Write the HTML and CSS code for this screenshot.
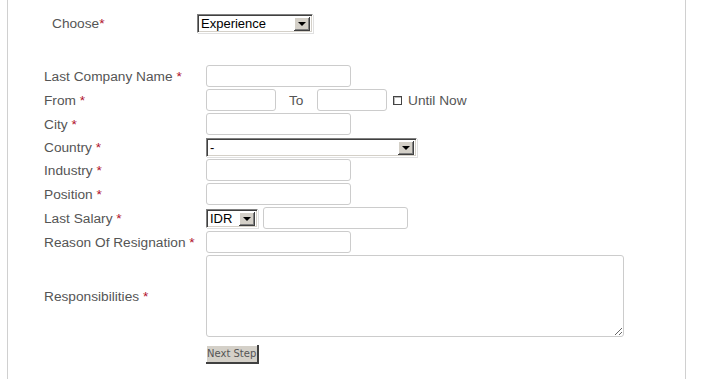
FILE: index.html
```html
<!DOCTYPE html>
<html lang="en">
<head>
    <meta charset="UTF-8">
    <title>Experience</title>
    <link rel="stylesheet" href="styles.css">
</head>
<body>
    <div class="page">
        <div class="choose-row">
            <label class="choose-label">Choose<span class="req">*</span></label>
            <span class="select-box choose-select">
                <select>
                    <option>Experience</option>
                </select>
            </span>
        </div>

        <!-- Form pengalaman kerja -->
        <form class="form-grid">
            <label>Last Company Name <span class="req">*</span></label>
            <div class="field"><input type="text" class="txt"></div>

            <label>From <span class="req">*</span></label>
            <div class="field">
                <input type="text" class="txt short">
                <span class="to">To</span>
                <input type="text" class="txt short">
                <input type="checkbox" class="check">
                <span class="until">Until Now</span>
            </div>

            <label>City <span class="req">*</span></label>
            <div class="field"><input type="text" class="txt"></div>

            <label>Country <span class="req">*</span></label>
            <div class="field compact">
                <span class="select-box country-select">
                    <select><option>-</option></select>
                </span>
            </div>

            <label>Industry <span class="req">*</span></label>
            <div class="field"><input type="text" class="txt"></div>

            <label>Position <span class="req">*</span></label>
            <div class="field"><input type="text" class="txt"></div>

            <label>Last Salary <span class="req">*</span></label>
            <div class="field">
                <span class="select-box currency-select">
                    <select><option>IDR</option></select>
                </span>
                <input type="text" class="txt salary">
            </div>

            <label>Reason Of Resignation <span class="req">*</span></label>
            <div class="field"><input type="text" class="txt"></div>

            <label>Responsibilities <span class="req">*</span></label>
            <div class="field"><textarea class="area"></textarea></div>

            <span></span>
            <div class="field submit-row"><button type="button" class="btn">Next Step</button></div>
        </form>
    </div>
</body>
</html>
```

FILE: styles.css
```css
* {
    box-sizing: border-box;
}
body {
    margin: 0;
    font-family: "Liberation Sans", Arial, sans-serif;
    font-size: 13.7px;
    color: #555;
    background: #fff;
}
.page {
    margin-left: 7px;
    width: 679px;
    height: 379px;
    border-left: 1px solid #d0d0d0;
    border-right: 1px solid #d0d0d0;
}
.req {
    color: #b0102a;
}
.choose-row {
    display: flex;
    align-items: center;
    padding-top: 14px;
    padding-left: 44px;
}
.choose-label {
    width: 145px;
}
.select-box {
    position: relative;
    display: inline-block;
    height: 19px;
    border-top: 1px solid #808080;
    border-left: 1px solid #808080;
    border-right: 1px solid #fff;
    border-bottom: 1px solid #fff;
    box-shadow: inset 1px 1px 0 #404040, inset -1px -1px 0 #d4d0c8, 1px 1px 0 #e0e0e0;
    background: #fff;
}
.select-box select {
    appearance: none;
    -webkit-appearance: none;
    border: none;
    background: transparent;
    width: 100%;
    height: 100%;
    padding: 0 0 0 3px;
    font-family: "Liberation Sans", Arial, sans-serif;
    font-size: 13px;
    color: #000;
    outline: none;
}
.select-box::after {
    content: "";
    position: absolute;
    top: 2px;
    right: 2px;
    width: 15px;
    height: 13px;
    background: #d4d0c8;
    border-right: 1px solid #404040;
    border-bottom: 1px solid #404040;
    box-shadow: inset 1px 1px 0 #fff, inset -1px -1px 0 #808080;
}
.select-box::before {
    content: "";
    position: absolute;
    z-index: 1;
    top: 7px;
    right: 6px;
    border-left: 4px solid transparent;
    border-right: 4px solid transparent;
    border-top: 4px solid #000;
}
.choose-select {
    width: 116px;
}
.country-select {
    width: 211px;
}
.currency-select {
    width: 52px;
    margin-right: 5px;
}
.form-grid {
    display: grid;
    grid-template-columns: 162px 1fr;
    row-gap: 2px;
    margin: 0;
    padding-top: 32px;
    padding-left: 36px;
    align-items: center;
}
.form-grid label {
    white-space: nowrap;
}
.field {
    display: flex;
    align-items: center;
    height: 22px;
}
.field.compact {
    height: 20px;
}
.txt {
    width: 145px;
    height: 22px;
    border: 1px solid #ccc;
    border-radius: 3px;
    padding: 2px 4px;
    font-family: "Liberation Sans", Arial, sans-serif;
    font-size: 13px;
}
.txt.short {
    width: 70px;
}
.to {
    width: 41px;
    padding-left: 13px;
}
.check {
    appearance: none;
    -webkit-appearance: none;
    width: 9px;
    height: 9px;
    margin: 0 6px 0 6px;
    border: 1px solid #444;
    background: #fff;
    box-shadow: inset 1px 1px 0 #bbb;
}
.field:has(.area) {
    height: 82px;
}
.area {
    width: 418px;
    height: 82px;
    border: 1px solid #ccc;
    border-radius: 3px;
}
.submit-row {
    height: 26px;
    padding-top: 5px;
}
.btn {
    height: 19px;
    padding: 0 1px;
    background: #d4d0c8;
    border: none;
    border-right: 2px solid #404040;
    border-bottom: 2px solid #404040;
    box-shadow: inset 1px 1px 0 #fff;
    font-family: "DejaVu Sans", Tahoma, sans-serif;
    font-size: 10px;
    color: #555;
}
```
